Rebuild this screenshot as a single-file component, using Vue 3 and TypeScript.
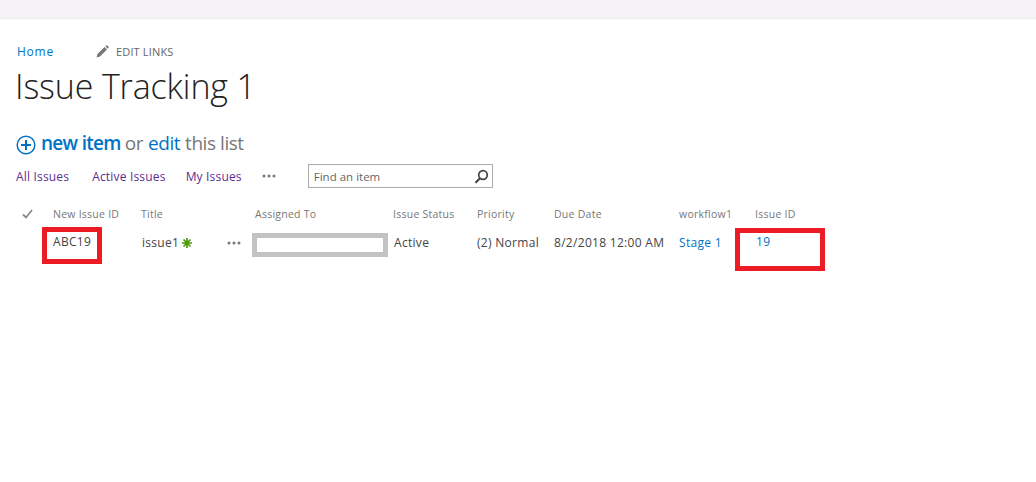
<script setup lang="ts">
const views: string[] = ['All Issues', 'Active Issues', 'My Issues']
const headers: string[] = ['New Issue ID', 'Title', 'Assigned To', 'Issue Status', 'Priority', 'Due Date', 'workflow1', 'Issue ID']
</script>

<template>
  <div class="page">
    <div class="topbar"></div>
    <main class="content">
      <nav class="crumbs">
        <a class="home">Home</a>
        <span class="edit">
          <svg width="13" height="13" viewBox="0 0 13 13"><path d="M0.5 12.5 L1.5 9 L8.5 2 L11 4.5 L4 11.5 Z" fill="#777"/><path d="M9.3 1.2 L10.2 0.4 Q10.7 0 11.2 0.4 L12.6 1.8 Q13 2.3 12.6 2.8 L11.8 3.7 Z" fill="#777"/></svg>
          EDIT LINKS
        </span>
      </nav>
      <h1 class="title">Issue Tracking 1</h1>
      <div class="hero">
        <svg class="plus" width="20" height="20" viewBox="0 0 20 20"><circle cx="10" cy="10" r="8.8" fill="none" stroke="#0072c6" stroke-width="1.5"/><path d="M10 5v10M5 10h10" stroke="#0072c6" stroke-width="2"/></svg>
        <a class="link strong">new item</a>
        <span class="muted">or</span>
        <a class="link">edit</a>
        <span class="muted">this list</span>
      </div>
      <div class="views">
        <a v-for="v in views" :key="v" class="view">{{ v }}</a>
        <span class="views-dots">
          <svg class="dots" width="14" height="4" viewBox="0 0 14 4"><circle cx="2" cy="2" r="1.5"/><circle cx="7" cy="2" r="1.5"/><circle cx="12" cy="2" r="1.5"/></svg>
        </span>
        <div class="search">
          <span>Find an item</span>
          <svg width="15" height="15" viewBox="0 0 15 15"><circle cx="9" cy="6" r="4.3" fill="none" stroke="#444" stroke-width="1.7"/><path d="M6 9.2 L1.5 13.7" stroke="#444" stroke-width="2.2"/></svg>
        </div>
      </div>
      <div class="table">
        <svg class="check" width="11" height="10" viewBox="0 0 11 10"><path d="M1 5.5 L4 8.5 L10 1" fill="none" stroke="#8a8a8a" stroke-width="1.8"/></svg>
        <span v-for="h in headers" :key="h" class="th">{{ h }}</span>

        <span></span>
        <span class="td annotated">ABC19</span>
        <span class="td title-cell">
          <span>issue1</span>
          <svg class="new" width="10" height="10" viewBox="0 0 10 10"><path d="M5 0v10M0 5h10M1.5 1.5l7 7M8.5 1.5l-7 7" stroke="#4e9a06" stroke-width="1.7"/></svg>
          <svg class="dots row-dots" width="14" height="4" viewBox="0 0 14 4"><circle cx="2" cy="2" r="1.5"/><circle cx="7" cy="2" r="1.5"/><circle cx="12" cy="2" r="1.5"/></svg>
        </span>
        <span class="td assigned"><span class="redacted"></span></span>
        <span class="td status">Active</span>
        <span class="td">(2) Normal</span>
        <span class="td">8/2/2018 12:00 AM</span>
        <a class="td blue">Stage 1</a>
        <a class="td blue annotated-id">19</a>
      </div>
    </main>
  </div>
</template>

<style>
html, body { margin: 0; background: #fff; }
</style>

<style scoped>
.page {
  width: 1036px;
  height: 482px;
  overflow: hidden;
  background: #fff;
  font-family: "Open Sans", "Noto Sans", sans-serif;
  color: #444;
}
.topbar {
  height: 18px;
  background: #f6f2f6;
  border-bottom: 1px solid #ececec;
}
.content { padding: 0 0 0 16px; }
.crumbs {
  display: flex;
  align-items: center;
  height: 18px;
  margin-top: 23px;
  font-size: 12px;
}
.home { color: #0072c6; letter-spacing: 0.75px; width: 80px; margin-left: 1px; }
.edit {
  display: flex;
  align-items: center;
  gap: 7px;
  color: #666;
  font-size: 11px;
  letter-spacing: 0.15px;
  margin-top: 1px;
  margin-left: -1px;
}
.title {
  margin: 3px 0 0 -1px;
  font-size: 34px;
  line-height: 46px;
  font-weight: 300;
  color: #222;
  letter-spacing: -0.15px;
}
.hero {
  display: flex;
  align-items: center;
  gap: 5px;
  height: 26px;
  margin-top: 21px;
  font-size: 19px;
  letter-spacing: -0.45px;
  color: #777;
}
.plus { margin-top: 3px; margin-right: 0; }
.link { color: #0072c6; }
.strong { font-weight: 600; letter-spacing: -0.7px; margin-right: -1px; }
.views {
  display: flex;
  align-items: center;
  height: 26px;
  margin-top: 7px;
  font-size: 12px;
  letter-spacing: 0.18px;
}
.view { color: #5c2d91; margin-right: 20px; }
.view:first-child { margin-right: 23px; }
.dots { fill: #777; }
.views-dots { display: flex; align-items: center; width: 46px; }
.search {
  box-sizing: border-box;
  width: 185px;
  height: 24px;
  display: flex;
  align-items: center;
  justify-content: space-between;
  padding: 0 3px 0 5px;
  border: 1px solid #ababab;
  color: #666;
  font-size: 11.5px;
  letter-spacing: 0;
}
.table {
  display: grid;
  grid-template-columns: 37px 88px 114px 138px 84px 77px 125px 76px 80px;
  grid-template-rows: 26px 30px;
  align-items: center;
  margin-top: 12px;
}
.check { margin-left: 6px; }
.th {
  color: #777;
  font-size: 10.5px;
  letter-spacing: 0.25px;
  white-space: nowrap;
}
.td {
  font-size: 12px;
  letter-spacing: 0.3px;
  color: #444;
  white-space: nowrap;
  position: relative;
}
.status { margin-left: 1px; }
.blue { color: #0072c6; }
.annotated::before,
.annotated-id::before {
  content: "";
  position: absolute;
  box-sizing: border-box;
  border: 5px solid #ed1c24;
}
.annotated::before { left: -11px; top: -6px; width: 60px; height: 37px; }
.annotated { margin-top: -2px; }
.annotated-id { margin-left: 1px; margin-top: -2px; }
.annotated-id::before { left: -21px; top: -5px; width: 90px; height: 43px; }
.title-cell { display: flex; align-items: center; margin-left: 1px; }
.new { margin: 1px 0 0 3px; }
.row-dots { margin: 2px 0 0 35px; }
.assigned { display: flex; }
.redacted {
  box-sizing: border-box;
  width: 136px;
  height: 24px;
  margin-left: -3px;
  margin-top: 6px;
  border: 5px solid #c3c3c3;
}
</style>
